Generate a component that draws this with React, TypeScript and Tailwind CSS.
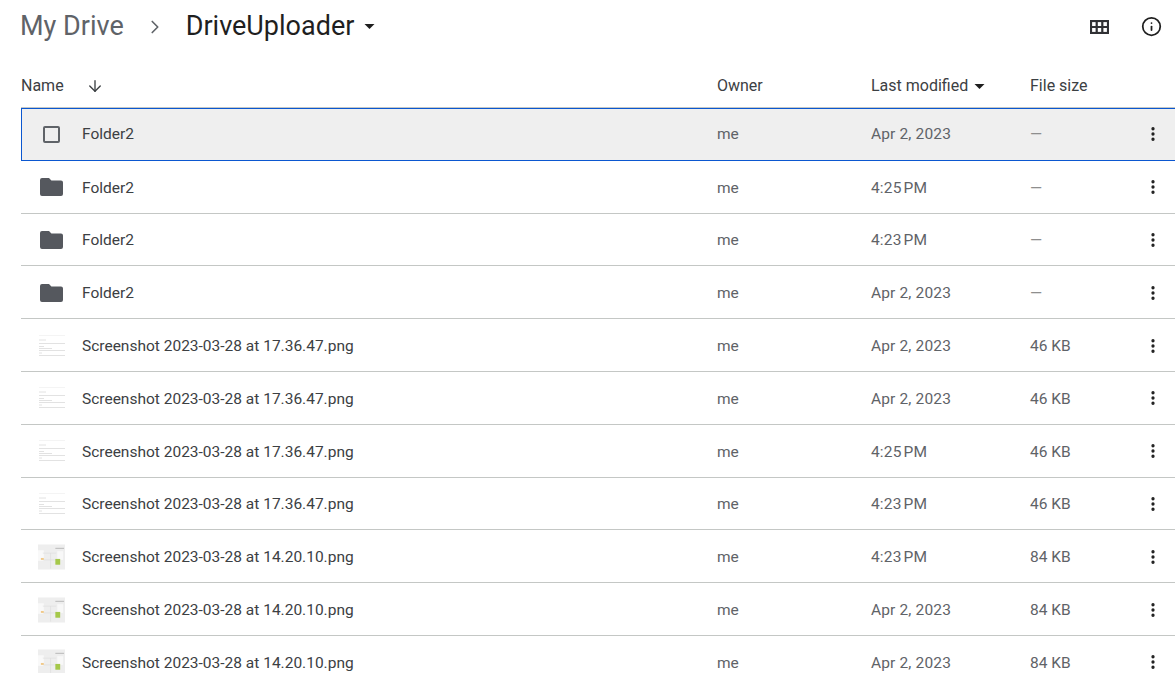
import { ArrowDown, ChevronRight, EllipsisVertical, Info } from "lucide-react";

const rowGrid = "grid grid-cols-[61px_635px_154px_159px_1fr] items-center";

type RowData = {
  kind: "selected" | "folder" | "doc" | "chart";
  name: string;
  modified: string;
  size: string;
};

const rows: RowData[] = [
  { kind: "selected", name: "Folder2", modified: "Apr 2, 2023", size: "—" },
  { kind: "folder", name: "Folder2", modified: "4:25\u202fPM", size: "—" },
  { kind: "folder", name: "Folder2", modified: "4:23\u202fPM", size: "—" },
  { kind: "folder", name: "Folder2", modified: "Apr 2, 2023", size: "—" },
  { kind: "doc", name: "Screenshot 2023-03-28 at 17.36.47.png", modified: "Apr 2, 2023", size: "46 KB" },
  { kind: "doc", name: "Screenshot 2023-03-28 at 17.36.47.png", modified: "Apr 2, 2023", size: "46 KB" },
  { kind: "doc", name: "Screenshot 2023-03-28 at 17.36.47.png", modified: "4:25\u202fPM", size: "46 KB" },
  { kind: "doc", name: "Screenshot 2023-03-28 at 17.36.47.png", modified: "4:23\u202fPM", size: "46 KB" },
  { kind: "chart", name: "Screenshot 2023-03-28 at 14.20.10.png", modified: "4:23\u202fPM", size: "84 KB" },
  { kind: "chart", name: "Screenshot 2023-03-28 at 14.20.10.png", modified: "Apr 2, 2023", size: "84 KB" },
  { kind: "chart", name: "Screenshot 2023-03-28 at 14.20.10.png", modified: "Apr 2, 2023", size: "84 KB" },
];

function Caret({ className }: { className: string }) {
  return (
    <svg viewBox="0 0 10 5" className={className} fill="currentColor">
      <path d="M0 0h10L5 5z" />
    </svg>
  );
}

function GridIcon() {
  return (
    <svg viewBox="0 0 19 14" className="w-[19px] h-[14px] text-[#303134]" fill="none" stroke="currentColor" strokeWidth="2.2">
      <rect x="1" y="1" width="17" height="12" />
      <path d="M6.7 1v12M12.3 1v12M1 7h17" />
    </svg>
  );
}

function FolderIcon() {
  return (
    <svg viewBox="0 0 23 18" className="w-[23px] h-[18px] text-[#55585e]" fill="currentColor">
      <path d="M2 0h7l2.4 2.4H21a2 2 0 0 1 2 2V16a2 2 0 0 1-2 2H2a2 2 0 0 1-2-2V2a2 2 0 0 1 2-2z" />
    </svg>
  );
}

function DocThumb() {
  return (
    <svg viewBox="0 0 28 22" className="w-[28px] h-[22px] blur-[0.3px]">
      <path d="M1 .5h26" stroke="#f4f4f4" strokeWidth="1" />
      <path d="M1 5h7M1 8.5h26M1 11.5h5M1 15.5h26M1 13.5h13M1 18h3M1 20.5h26" stroke="#e2e2e2" strokeWidth="1" />
    </svg>
  );
}

function ChartThumb() {
  return (
    <svg viewBox="0 0 28 26" className="w-[27px] h-[26px] blur-[0.3px]">
      <rect width="28" height="26" fill="#eeeeee" />
      <rect x="0" y="6" width="6" height="11" fill="#f9f9f9" />
      <path d="M5 9h14M13 9v16M5 16h14" stroke="#dedede" strokeWidth="0.7" />
      <path d="M18 4h9" stroke="#b5b5b5" strokeWidth="1" />
      <rect x="20" y="7" width="6" height="9" fill="#f8f8f8" />
      <rect x="18" y="15" width="5" height="6" fill="#a5c84a" />
      <rect x="3" y="14" width="3" height="2" fill="#f0c98a" />
    </svg>
  );
}

function RowIcon({ kind }: { kind: RowData["kind"] }) {
  if (kind === "selected") {
    return <div className="w-[17px] h-[17px] rounded-[2px] border-2 border-[#5f6368]" />;
  }
  if (kind === "folder") return <FolderIcon />;
  if (kind === "doc") return <DocThumb />;
  return <ChartThumb />;
}

function Row({ row }: { row: RowData }) {
  const selected = row.kind === "selected";
  // text sits a pixel lower than the icons on the plain rows
  const textNudge = selected ? "" : "pt-[2px]";
  return (
    <div
      className={`${rowGrid} h-[52.8px] ${
        selected
          ? "bg-[#efefef] shadow-[inset_1px_0_0_#0b57d0,inset_0_1px_0_#0b57d0,inset_0_-1px_0_#0b57d0]"
          : "border-b border-[#c4c7c5] pt-[1px]"
      }`}
    >
      <div className="flex justify-center">
        <RowIcon kind={row.kind} />
      </div>
      <div className={`text-[15.5px] text-[#3c4043] ${textNudge}`}>{row.name}</div>
      <div className={`text-[15.5px] text-[#5f6368] ${textNudge}`}>me</div>
      <div className={`text-[15.5px] tracking-[0.15px] text-[#5f6368] ${textNudge}`}>{row.modified}</div>
      <div className="flex items-center justify-between text-[15.5px] text-[#5f6368]">
        <span className={`${textNudge} ${row.size === "—" ? "text-[#8e8e8e]" : ""}`}>{row.size}</span>
        <EllipsisVertical className="w-[18px] h-[18px] mr-[13px] text-[#1f1f1f]" strokeWidth={2.4} />
      </div>
    </div>
  );
}

export default function App() {
  return (
    <div className="w-[1175px] h-[673px] overflow-hidden bg-white font-['Roboto',sans-serif]">
      <div className="h-[53px] pl-[20px] pr-[13px] flex items-center">
        <span className="text-[27px] text-[#5f6368]">My Drive</span>
        <ChevronRight className="w-[22px] h-[22px] ml-[20px] text-[#5f6368]" strokeWidth={1.8} />
        <span className="ml-[20px] text-[27px] text-[#1f1f1f]">DriveUploader</span>
        <Caret className="w-[11px] h-[5px] ml-[10px] text-[#1f1f1f]" />
        <div className="ml-auto flex items-center gap-[32px]">
          <GridIcon />
          <Info className="w-[21px] h-[21px] text-[#1f1f1f]" strokeWidth={2} />
        </div>
      </div>
      <div className="pl-[21px]">
        <div className={`${rowGrid} h-[55px] pt-[12px] text-[16px] text-[#3c4043] border-b border-[#c4c7c5]`}>
          <div>Name</div>
          <div>
            <ArrowDown className="w-[18px] h-[18px] ml-[4px] text-[#3c4043]" strokeWidth={1.8} />
          </div>
          <div>Owner</div>
          <div className="flex items-center gap-[6px]">
            Last modified
            <Caret className="w-[11px] h-[5px] text-[#1f1f1f]" />
          </div>
          <div>File size</div>
        </div>
        {rows.map((row, i) => (
          <Row key={i} row={row} />
        ))}
      </div>
    </div>
  );
}
